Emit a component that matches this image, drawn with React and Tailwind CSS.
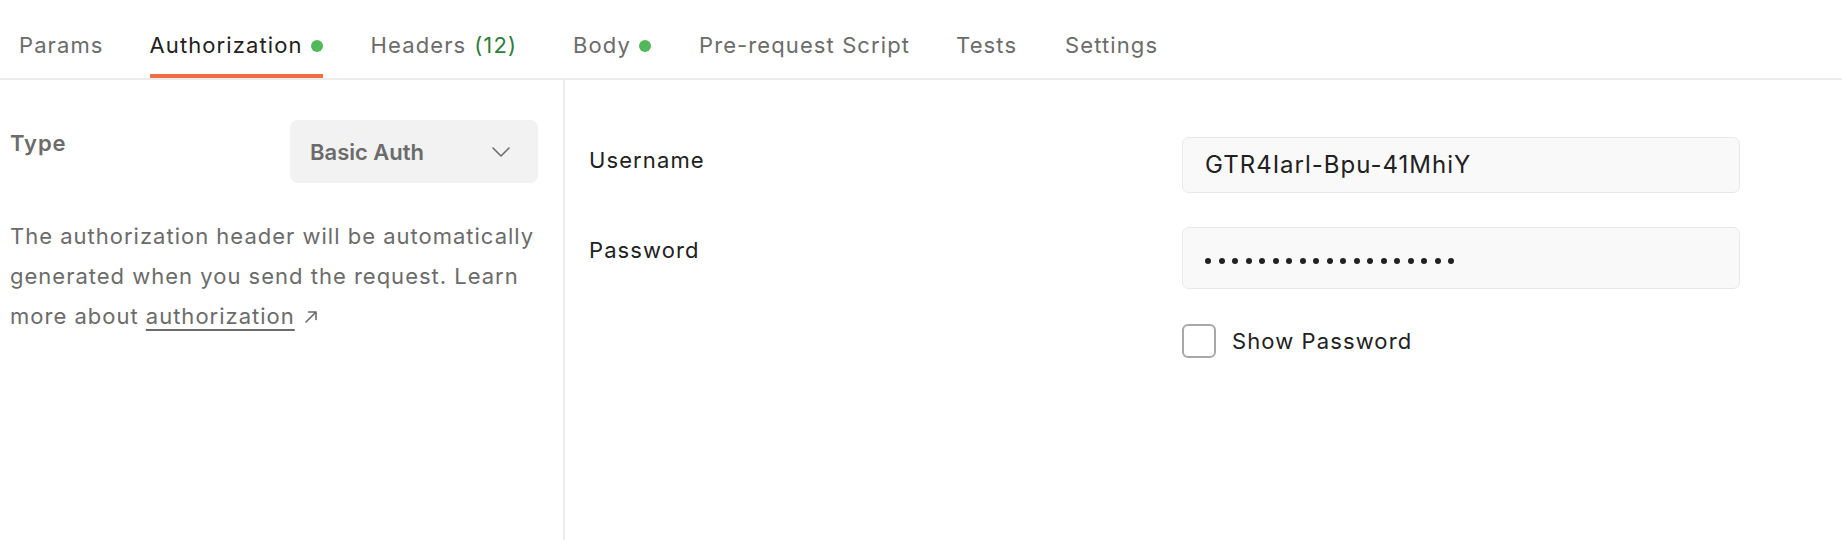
import React from 'react';

const tabs = [
  { label: 'Params', ml: 'ml-[19px]' },
  { label: 'Authorization', active: true, dot: true, ml: 'ml-[46px]' },
  { label: 'Headers', count: '(12)', ml: 'ml-[48px]' },
  { label: 'Body', dot: true, ml: 'ml-[56px]' },
  { label: 'Pre-request Script', ml: 'ml-[48px]' },
  { label: 'Tests', ml: 'ml-[46px]' },
  { label: 'Settings', ml: 'ml-[48px]' },
];

function Chevron() {
  return (
    <svg width="18" height="10" viewBox="0 0 18 10" fill="none">
      <polyline points="1,1 9,9 17,1" stroke="#6b6b6b" strokeWidth="1.6" strokeLinecap="round" strokeLinejoin="round" />
    </svg>
  );
}

function ArrowUpRight() {
  return (
    <svg width="14" height="14" viewBox="0 0 14 14" fill="none" className="inline-block ml-[9px] mb-[3px]">
      <path d="M2 12 L12 2 M4.5 2 H12 V9.5" stroke="#6b6b6b" strokeWidth="1.6" strokeLinecap="round" strokeLinejoin="round" />
    </svg>
  );
}

export default function App() {
  return (
    <div className="w-[1842px] h-[540px] bg-white overflow-hidden flex flex-col font-['Inter','Liberation_Sans',sans-serif] text-[22px]">
      {/* Tabs */}
      <div className="flex h-[80px] border-b-2 border-[#ececec] shrink-0 tracking-[1.1px]">
        {tabs.map(t => (
          <div key={t.label} className={`${t.ml} flex flex-col`}>
            <div className={`pt-[32px] h-[58px] leading-[26px] flex items-start whitespace-nowrap ${t.active ? 'text-[#212121]' : 'text-[#6b6b6b]'}`}>
              <span>{t.label}</span>
              {t.count && <span className="ml-[8px] text-[#2f7d3b]">{t.count}</span>}
              {t.dot && <span className="ml-[8px] mt-[8px] w-[12px] h-[12px] rounded-full bg-[#52b85a]" />}
            </div>
            <div className={`mt-[16px] h-[4px] ${t.active ? 'bg-[#ef6f43]' : ''}`} />
          </div>
        ))}
      </div>

      <div className="flex flex-1">
        {/* Left: type */}
        <div className="w-[565px] shrink-0 border-r-2 border-[#ededed] pl-[10px] pr-[25px] pt-[40px]">
          <div className="flex justify-between items-start">
            <div className="mt-[10px] leading-[26px] font-semibold text-[#6b6b6b] tracking-[0.9px]">Type</div>
            <div className="w-[248px] h-[63px] rounded-[8px] bg-[#f2f2f2] flex items-center justify-between pl-[20px] pr-[28px]">
              <span className="font-semibold text-[#6b6b6b] leading-[26px]">Basic Auth</span>
              <Chevron />
            </div>
          </div>
          <p className="mt-[33px] whitespace-nowrap text-[22px] tracking-[1px] leading-[40px] text-[#6b6b6b]">
            The authorization header will be automatically<br />
            generated when you send the request. Learn<br />
            more about{' '}
            <span className="underline decoration-[1.5px] underline-offset-[5px]">authorization</span>
            <ArrowUpRight />
          </p>
        </div>

        {/* Right: credentials */}
        <div className="flex-1 pl-[24px] pt-[57px] text-[#212121] tracking-[1.1px]">
          <div className="flex items-start">
            <div className="w-[593px] mt-[10px] leading-[26px]">Username</div>
            <div className="w-[558px] h-[56px] rounded-[7px] bg-[#f9f9f9] border-[1.5px] border-[#e8e8e8] flex items-center px-[22px] text-[24px] tracking-[1px] leading-[28px]">
              GTR4Iarl-Bpu-41MhiY
            </div>
          </div>
          <div className="flex items-start mt-[34px]">
            <div className="w-[593px] mt-[10px] leading-[26px]">Password</div>
            <div className="w-[558px] h-[62px] rounded-[7px] bg-[#f9f9f9] border-[1.5px] border-[#e8e8e8] flex items-center px-[22px] pt-[6px] gap-[7.5px]">
              {Array.from({ length: 19 }).map((_, i) => (
                <span key={i} className="w-[6px] h-[6px] rounded-full bg-[#212121]" />
              ))}
            </div>
          </div>
          <div className="flex items-center mt-[35px] ml-[593px]">
            <div className="w-[34px] h-[34px] rounded-[6px] border-2 border-[#a8a8a8] bg-white" />
            <span className="ml-[16px] leading-[26px]">Show Password</span>
          </div>
        </div>
      </div>
    </div>
  );
}
